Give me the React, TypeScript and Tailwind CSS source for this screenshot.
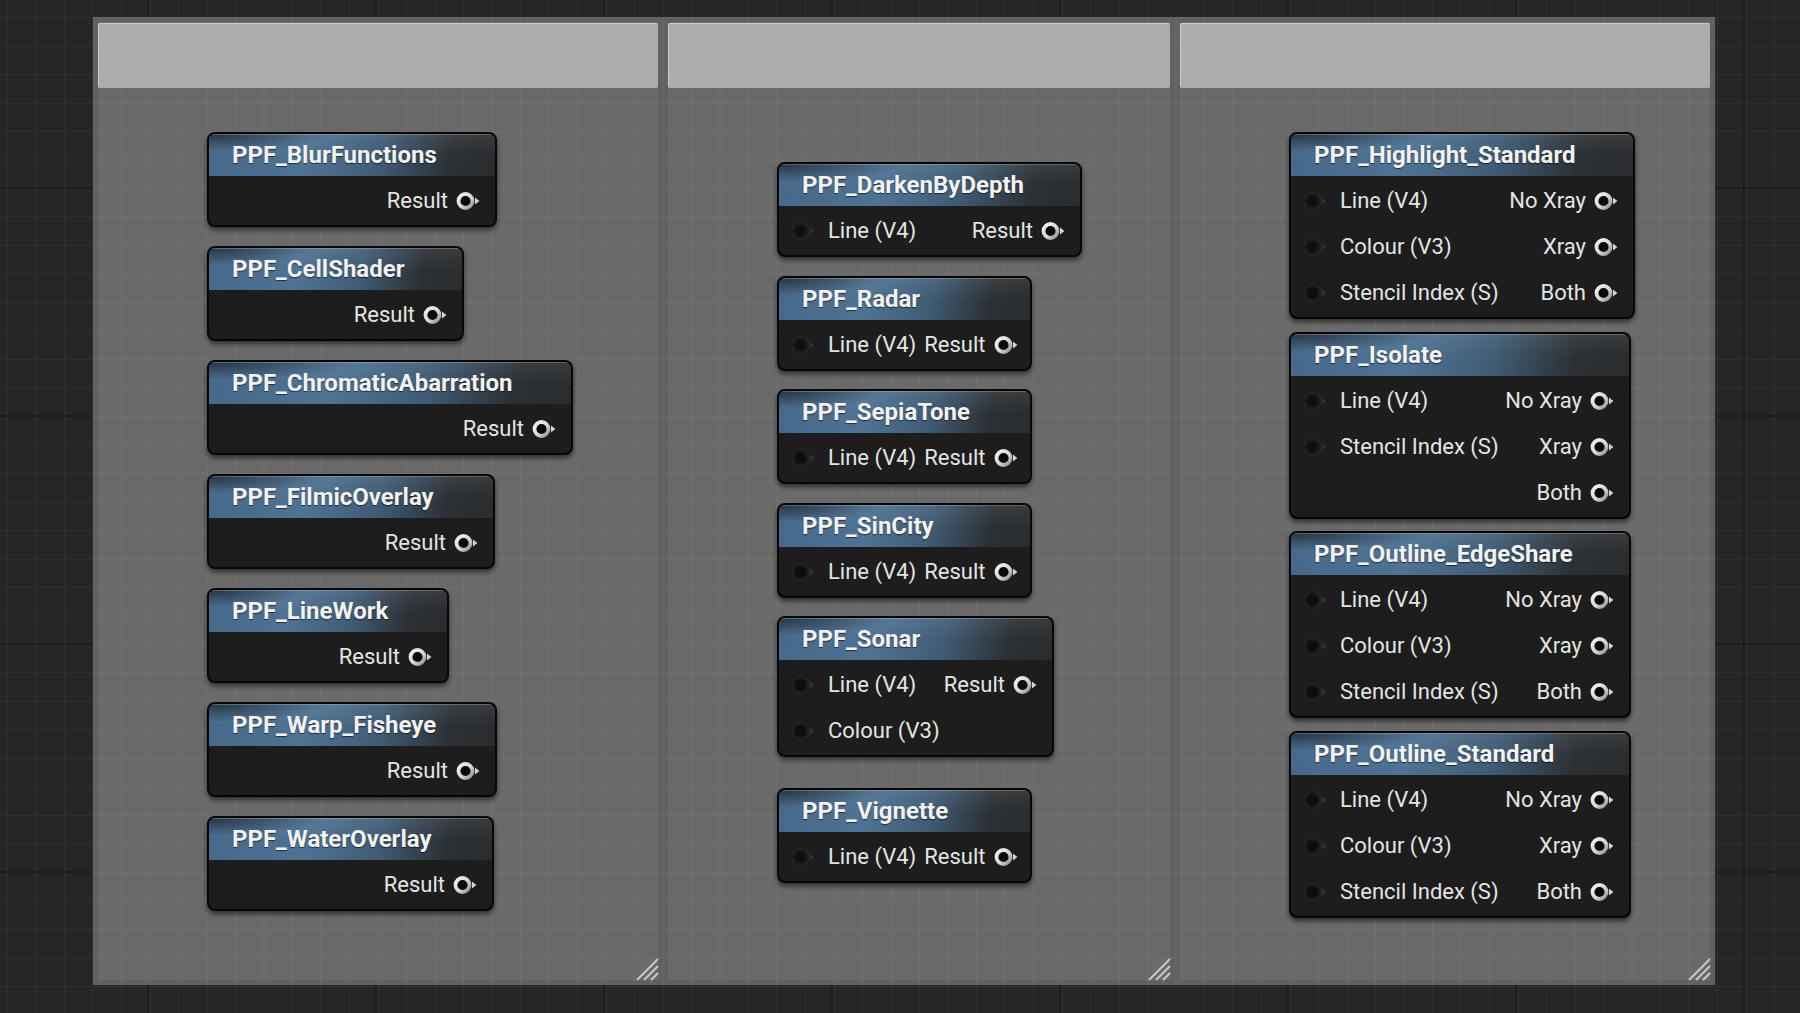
import React, { useId } from "react";

type Row = { in?: string; out?: string };
type NodeDef = { title: string; w: string; rows: Row[]; extra?: string };

const single = [{ out: "Result" }];
const lineResult = [{ in: "Line (V4)", out: "Result" }];
const xray3 = [
  { in: "Line (V4)", out: "No Xray" },
  { in: "Colour (V3)", out: "Xray" },
  { in: "Stencil Index (S)", out: "Both" },
];

const col1: NodeDef[] = [
  { title: "PPF_BlurFunctions", w: "w-[290px]", rows: single },
  { title: "PPF_CellShader", w: "w-[257px]", rows: single },
  { title: "PPF_ChromaticAbarration", w: "w-[366px]", rows: single },
  { title: "PPF_FilmicOverlay", w: "w-[288px]", rows: single },
  { title: "PPF_LineWork", w: "w-[242px]", rows: single },
  { title: "PPF_Warp_Fisheye", w: "w-[290px]", rows: single },
  { title: "PPF_WaterOverlay", w: "w-[287px]", rows: single },
];

const col2: NodeDef[] = [
  { title: "PPF_DarkenByDepth", w: "w-[305px]", rows: lineResult },
  { title: "PPF_Radar", w: "w-[255px]", rows: lineResult },
  { title: "PPF_SepiaTone", w: "w-[255px]", rows: lineResult },
  { title: "PPF_SinCity", w: "w-[255px]", rows: lineResult },
  {
    title: "PPF_Sonar",
    w: "w-[277px]",
    rows: [{ in: "Line (V4)", out: "Result" }, { in: "Colour (V3)" }],
  },
  { title: "PPF_Vignette", w: "w-[255px]", rows: lineResult, extra: "mt-[12.5px]" },
];

const col3: NodeDef[] = [
  { title: "PPF_Highlight_Standard", w: "w-[346px]", rows: xray3 },
  {
    title: "PPF_Isolate",
    w: "w-[342px]",
    rows: [
      { in: "Line (V4)", out: "No Xray" },
      { in: "Stencil Index (S)", out: "Xray" },
      { out: "Both" },
    ],
  },
  { title: "PPF_Outline_EdgeShare", w: "w-[342px]", rows: xray3 },
  { title: "PPF_Outline_Standard", w: "w-[342px]", rows: xray3 },
];

// exec pin style circle + small arrow; lit ring for outputs, dim for unconnected inputs
function OutPin() {
  const id = useId();
  return (
    <svg width="25" height="20" viewBox="0 0 25 20" className="shrink-0">
      <defs>
        <linearGradient id={id} x1="0" y1="0" x2="1" y2="1">
          <stop offset="0" stopColor="#f4f4f4" />
          <stop offset="0.6" stopColor="#d2d2d2" />
          <stop offset="1" stopColor="#8d8d8d" />
        </linearGradient>
      </defs>
      <circle cx="9.5" cy="10" r="7" fill="#0a0a0a" stroke={`url(#${id})`} strokeWidth="3.8" />
      <path d="M19 6.6 L23.4 10 L19 13.4 Z" fill="#d4d4d4" />
    </svg>
  );
}

function InPin() {
  return (
    <svg width="25" height="20" viewBox="0 0 25 20" className="shrink-0">
      <circle cx="9.5" cy="10" r="8.6" fill="none" stroke="#2c2c2c" strokeWidth="1" />
      <circle cx="9.5" cy="10" r="6.8" fill="#0d0d0d" stroke="#1a1a1a" strokeWidth="2.6" />
      <path d="M19 6.6 L23.4 10 L19 13.4 Z" fill="#323232" />
    </svg>
  );
}

function Grip() {
  return (
    <svg
      width="24"
      height="24"
      viewBox="0 0 24 24"
      className="absolute bottom-[4px] right-[4px]"
    >
      <path
        d="M2 23 L23 2 M9 23 L23 9 M16 23 L23 16"
        stroke="#c8c8c8"
        strokeWidth="2"
        fill="none"
      />
    </svg>
  );
}

function GraphNode({ node }: { node: NodeDef }) {
  return (
    <div
      className={`${node.w} ${node.extra ?? ""} overflow-hidden rounded-[8px] border-2 border-[#070707] bg-[#1c1d1c] shadow-[0_3px_5px_rgba(0,0,0,0.55)]`}
    >
      <div className="flex h-[42px] items-center pl-[23px] [background-image:radial-gradient(ellipse_at_0%_0%,rgba(0,0,0,0.55)_0%,rgba(0,0,0,0)_30%),linear-gradient(to_bottom,rgba(255,255,255,0.07)_0%,rgba(0,0,0,0)_55%),linear-gradient(100deg,#46688a_0%,#4f7394_35%,#405c75_60%,#2c3034_84%,#2a2c2e_100%)] shadow-[inset_0_1px_0_rgba(255,255,255,0.22)]">
        <span className="whitespace-nowrap text-[24px] font-bold leading-none text-[#f2f2f2] [text-shadow:0_1px_1px_rgba(0,0,0,0.6)]">
          {node.title}
        </span>
      </div>
      <div className="pb-[1px] pt-[2px]">
        {node.rows.map((r, i) => (
          <div key={i} className="flex h-[46px] items-center text-[22px] leading-none text-[#e4e4e4]">
            {r.in ? (
              <div className="flex items-center pl-[12px]">
                <InPin />
                <span className="ml-[12px] whitespace-nowrap">{r.in}</span>
              </div>
            ) : null}
            <div className="min-w-[8px] flex-1" />
            {r.out ? (
              <div className="flex items-center pr-[14px]">
                <span className="mr-[8px] whitespace-nowrap">{r.out}</span>
                <OutPin />
              </div>
            ) : null}
          </div>
        ))}
      </div>
    </div>
  );
}

function Panel({
  width,
  top,
  gap,
  nodes,
}: {
  width: string;
  top: string;
  gap: string;
  nodes: NodeDef[];
}) {
  return (
    <div
      className={`relative flex h-[968px] ${width} flex-col bg-[#6a6a6a] px-[5px] pt-[6px] shadow-[inset_0_0_0_5px_rgba(0,0,0,0.08)] [background-image:linear-gradient(to_right,#727272_1px,transparent_1px),linear-gradient(to_bottom,#727272_1px,transparent_1px)] [background-size:28.5px_28.5px,28.5px_28.5px] [background-position:7px_17px,7px_17px] [background-attachment:fixed]`}
    >
      <div className="h-[65px] shrink-0 rounded-[2px] bg-[#acacac] shadow-[inset_1px_1px_0_rgba(255,255,255,0.4)]" />
      <div className={`flex flex-col items-start pl-[109px] ${top} ${gap}`}>
        {nodes.map((n) => (
          <GraphNode key={n.title} node={n} />
        ))}
      </div>
      <Grip />
    </div>
  );
}

export default function App() {
  return (
    <div className="h-[1013px] w-[1800px] overflow-hidden bg-[#262626] pl-[93px] pt-[17px] font-[Roboto,sans-serif] [background-image:linear-gradient(to_right,#1d1d1d_2px,transparent_2px),linear-gradient(to_bottom,#1d1d1d_2px,transparent_2px),linear-gradient(to_right,#303030_1px,transparent_1px),linear-gradient(to_bottom,#303030_1px,transparent_1px)] [background-size:228px_228px,228px_228px,28.5px_28.5px,28.5px_28.5px] [background-position:147px_187px,147px_187px,7px_17px,7px_17px]">
      <div className="flex">
        <Panel width="w-[570px]" top="pt-[44px]" gap="gap-[19px]" nodes={col1} />
        <Panel width="w-[512px]" top="pt-[74px]" gap="gap-[18.5px]" nodes={col2} />
        <Panel width="w-[540px]" top="pt-[44px]" gap="gap-[12.5px]" nodes={col3} />
      </div>
    </div>
  );
}
